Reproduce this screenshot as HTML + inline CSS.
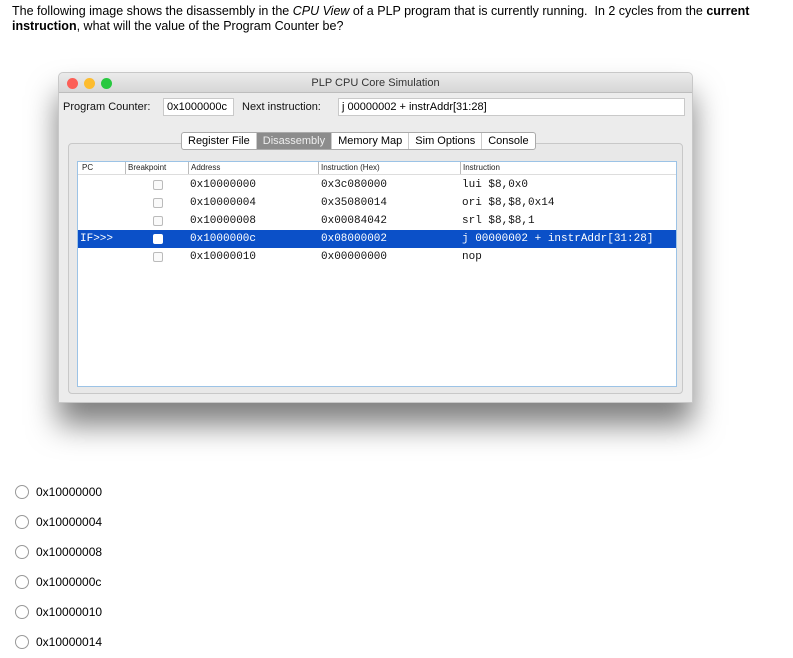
<!DOCTYPE html>
<html><head><meta charset="utf-8"><style>
*{margin:0;padding:0;box-sizing:border-box}
body{width:793px;height:658px;background:#fff;position:relative;font-family:"Liberation Sans",sans-serif;color:#000;overflow:hidden}
.a{position:absolute}
.q{left:12px;top:4px;font-size:12.5px;line-height:15px;width:780px}
.win{left:58px;top:72px;width:635px;height:331px;background:#ececec;border:1px solid #c8c8c8;border-radius:5px 5px 0 0;box-shadow:0 22px 30px rgba(0,0,0,.5)}
.title{left:0;top:0;width:633px;height:20px;background:linear-gradient(#ebebeb,#d6d6d6);border-bottom:1px solid #bdbdbd;border-radius:5px 5px 0 0;text-align:center;font-size:11px;line-height:20px;color:#333}
.dot{top:5px;width:11px;height:11px;border-radius:50%}
.lbl{font-size:11px;color:#111}
.field{background:#fff;border:1px solid #c9c9c9;height:18px;font-size:11px;line-height:16px;padding-left:3px}
.tabs{left:122px;top:59px;height:18px;display:flex;border:1px solid #aaa;border-radius:3px;background:#fff;font-size:11px;line-height:16px;z-index:2}
.tabs div{padding:0 6px;border-right:1px solid #ccc}
.panel{left:9px;top:70px;width:615px;height:251px;border:1px solid #c8c8c8;border-radius:4px;background:#e8e8e8}
.table{left:18px;top:88px;width:600px;height:226px;background:#fff;border:1px solid #9cc3e6}
.hdr{left:0;top:0;width:598px;height:13px;border-bottom:1px solid #ddd;font-size:8px;line-height:12px;color:#222}
.hdr span{position:absolute;border-left:1px solid #bbb;padding-left:2px}
.row{left:0;width:598px;height:18px;font-family:"Liberation Mono",monospace;font-size:11px;line-height:18px;color:#111}
.row span{position:absolute}
.cb{position:absolute;left:75px;top:4px;width:10px;height:10px;border:1px solid #bbb;border-radius:2px;background:#fafafa}
.sel{background:#0b50c8;color:#fff}
.opt{left:15px;font-size:12px;line-height:14px}
.opt i{position:absolute;left:0;top:0;width:14px;height:14px;border:1px solid #999;border-radius:50%}
.opt b{font-weight:normal;position:absolute;left:21px;top:0;white-space:nowrap}
</style></head><body>
<div class="a q">The following image shows the disassembly in the <i>CPU View</i> of a PLP program that is currently running.&nbsp; In 2 cycles from the <b>current instruction</b>, what will the value of the Program Counter be?</div>
<div class="a win">
 <div class="a title">PLP CPU Core Simulation</div>
 <div class="a dot" style="left:8px;background:#fc5f57"></div>
 <div class="a dot" style="left:25px;background:#fdbc2e"></div>
 <div class="a dot" style="left:42px;background:#28c840"></div>
 <div class="a lbl" style="left:4px;top:28px">Program Counter:</div>
 <div class="a field" style="left:104px;top:25px;width:71px">0x1000000c</div>
 <div class="a lbl" style="left:183px;top:28px">Next instruction:</div>
 <div class="a field" style="left:279px;top:25px;width:347px">j 00000002 + instrAddr[31:28]</div>
 <div class="a panel"></div>
 <div class="a tabs"><div>Register File</div><div style="background:#8c8c8c;color:#eee">Disassembly</div><div>Memory Map</div><div>Sim Options</div><div style="border:none">Console</div></div>
 <div class="a table">
  <div class="a hdr"><span style="left:2px;border:none">PC</span><span style="left:47px">Breakpoint</span><span style="left:110px">Address</span><span style="left:240px">Instruction (Hex)</span><span style="left:382px">Instruction</span></div>
  <div class="a row" style="top:14px"><i class="cb"></i><span style="left:112px">0x10000000</span><span style="left:243px">0x3c080000</span><span style="left:384px">lui $8,0x0</span></div>
  <div class="a row" style="top:32px"><i class="cb"></i><span style="left:112px">0x10000004</span><span style="left:243px">0x35080014</span><span style="left:384px">ori $8,$8,0x14</span></div>
  <div class="a row" style="top:50px"><i class="cb"></i><span style="left:112px">0x10000008</span><span style="left:243px">0x00084042</span><span style="left:384px">srl $8,$8,1</span></div>
  <div class="a row sel" style="top:68px;color:#fff"><span style="left:2px">IF&gt;&gt;&gt;</span><i class="cb" style="background:#fff;border-color:#fff"></i><span style="left:112px">0x1000000c</span><span style="left:243px">0x08000002</span><span style="left:384px">j 00000002 + instrAddr[31:28]</span></div>
  <div class="a row" style="top:86px"><i class="cb"></i><span style="left:112px">0x10000010</span><span style="left:243px">0x00000000</span><span style="left:384px">nop</span></div>
 </div>
</div>
<div class="a opt" style="top:485px"><i></i><b>0x10000000</b></div>
<div class="a opt" style="top:515px"><i></i><b>0x10000004</b></div>
<div class="a opt" style="top:545px"><i></i><b>0x10000008</b></div>
<div class="a opt" style="top:575px"><i></i><b>0x1000000c</b></div>
<div class="a opt" style="top:605px"><i></i><b>0x10000010</b></div>
<div class="a opt" style="top:635px"><i></i><b>0x10000014</b></div>
</body></html>
